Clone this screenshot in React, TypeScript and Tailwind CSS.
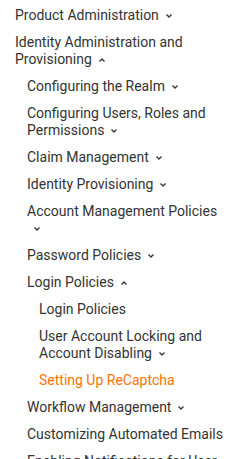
import React from 'react';

type Item = {
  label: string;
  open?: boolean;
  caret?: boolean;
  active?: boolean;
  children?: Item[];
};

const nav: Item[] = [
  { label: 'Product Administration', caret: true },
  {
    label: 'Identity Administration and Provisioning',
    caret: true,
    open: true,
    children: [
      { label: 'Configuring the Realm', caret: true },
      { label: 'Configuring Users, Roles and Permissions', caret: true },
      { label: 'Claim Management', caret: true },
      { label: 'Identity Provisioning', caret: true },
      { label: 'Account Management Policies', caret: true },
      { label: 'Password Policies', caret: true },
      {
        label: 'Login Policies',
        caret: true,
        open: true,
        children: [
          { label: 'Login Policies' },
          { label: 'User Account Locking and Account Disabling', caret: true },
          { label: 'Setting Up ReCaptcha', active: true },
        ],
      },
      { label: 'Workflow Management', caret: true },
      { label: 'Customizing Automated Emails' },
      { label: 'Enabling Notifications for User Operations', caret: true },
    ],
  },
];

function Caret({ up }: { up?: boolean }) {
  return (
    <svg
      width="8"
      height="6"
      viewBox="0 0 8 6"
      className={`ml-[6px] inline-block align-middle ${up ? 'rotate-180' : ''}`}
    >
      <path d="M1.5 1.5 L4 4 L6.5 1.5" fill="none" stroke="#333" strokeWidth="1.3" />
    </svg>
  );
}

function NavList({ items, level }: { items: Item[]; level: number }) {
  return (
    <ul>
      {items.map((item, i) => (
        <li key={i}>
          <div
            className={`py-[5px] leading-[17px] ${level === 0 ? '' : 'pl-3'} ${
              item.active ? 'text-[#ff7300]' : 'text-[#333]'
            }`}
          >
            {item.label}
            {item.caret && <Caret up={item.open} />}
          </div>
          {item.open && item.children && (
            <div className={level === 0 ? '' : 'pl-3'}>
              <NavList items={item.children} level={level + 1} />
            </div>
          )}
        </li>
      ))}
    </ul>
  );
}

export default function App() {
  return (
    <div
      className="w-[238px] h-[459px] overflow-hidden bg-white pl-[15px] pr-3 pt-[2px] text-[14px]"
      style={{ fontFamily: 'Roboto, "Liberation Sans", sans-serif' }}
    >
      <NavList items={nav} level={0} />
    </div>
  );
}
